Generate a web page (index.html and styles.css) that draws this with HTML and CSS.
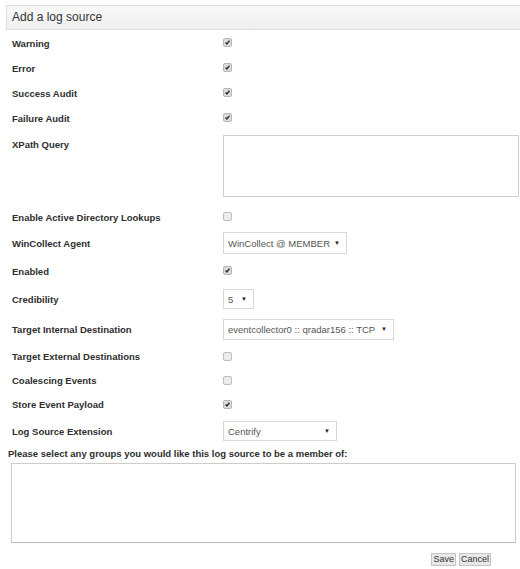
FILE: index.html
```html
<!DOCTYPE html>
<html lang="en">

<head>
    <meta charset="UTF-8" />
    <title>Add a log source</title>
    <link rel="stylesheet" href="styles.css">
</head>

<body>
    <div class="panel">
        <div class="panel-header">Add a log source</div>

        <div class="fields">
            <div class="row">
                <span class="label">Warning</span>
                <span class="check on"><svg viewBox="0 0 9 9"><path d="M2 4.6 L3.7 6.4 L7 2.3" /></svg></span>
            </div>
            <div class="row">
                <span class="label">Error</span>
                <span class="check on"><svg viewBox="0 0 9 9"><path d="M2 4.6 L3.7 6.4 L7 2.3" /></svg></span>
            </div>
            <div class="row">
                <span class="label">Success Audit</span>
                <span class="check on"><svg viewBox="0 0 9 9"><path d="M2 4.6 L3.7 6.4 L7 2.3" /></svg></span>
            </div>
            <div class="row">
                <span class="label">Failure Audit</span>
                <span class="check on"><svg viewBox="0 0 9 9"><path d="M2 4.6 L3.7 6.4 L7 2.3" /></svg></span>
            </div>
            <div class="row row-xpath">
                <span class="label">XPath Query</span>
                <div class="xpath"></div>
            </div>
            <div class="row">
                <span class="label">Enable Active Directory Lookups</span>
                <span class="check"></span>
            </div>
            <div class="row row-28">
                <span class="label">WinCollect Agent</span>
                <div class="select select-agent"><span>WinCollect @ MEMBER</span><span class="arrow">▼</span></div>
            </div>
            <div class="row row-27">
                <span class="label">Enabled</span>
                <span class="check on"><svg viewBox="0 0 9 9"><path d="M2 4.6 L3.7 6.4 L7 2.3" /></svg></span>
            </div>
            <div class="row row-30">
                <span class="label">Credibility</span>
                <div class="select select-cred"><span>5</span><span class="arrow">▼</span></div>
            </div>
            <div class="row row-30">
                <span class="label">Target Internal Destination</span>
                <div class="select select-target"><span>eventcollector0 :: qradar156 :: TCP</span><span class="arrow">▼</span></div>
            </div>
            <div class="row row-24">
                <span class="label">Target External Destinations</span>
                <span class="check"></span>
            </div>
            <div class="row row-24">
                <span class="label">Coalescing Events</span>
                <span class="check"></span>
            </div>
            <div class="row row-24">
                <span class="label">Store Event Payload</span>
                <span class="check on"><svg viewBox="0 0 9 9"><path d="M2 4.6 L3.7 6.4 L7 2.3" /></svg></span>
            </div>
            <div class="row row-30">
                <span class="label">Log Source Extension</span>
                <div class="select select-ext"><span>Centrify</span><span class="arrow">▼</span></div>
            </div>
        </div>

        <p class="groups-label">Please select any groups you would like this log source to be a member of:</p>
        <div class="groups-box"></div>

        <div class="actions">
            <button type="button">Save</button>
            <button type="button">Cancel</button>
        </div>
    </div>
</body>

</html>
```

FILE: styles.css
```css
body {
    margin: 0;
    width: 520px;
    height: 569px;
    overflow: hidden;
    font-family: "Liberation Sans", Arial, sans-serif;
    color: #333;
    background: #fff;
}

.panel {
    padding-top: 5px;
}

.panel-header {
    margin-left: 6px;
    height: 23px;
    line-height: 23px;
    padding-left: 5px;
    border: 1px solid #dedede;
    border-right: none;
    background: linear-gradient(#f9f9f9, #efefef);
    font-size: 12px;
    color: #333;
}

.fields {
    margin-left: 6px;
}

.row {
    display: grid;
    grid-template-columns: 211px 1fr;
    align-items: center;
    height: 25px;
    padding-left: 6px;
}

.row-24 {
    height: 24px;
}

.row-27 {
    height: 27px;
}

.row-28 {
    height: 28px;
}

.row-30 {
    height: 30px;
}

.row-xpath {
    height: auto;
    align-items: start;
    padding-top: 5px;
    padding-bottom: 7px;
}

.row-xpath .label {
    padding-top: 4px;
}

.label {
    font-size: 9.5px;
    font-weight: bold;
    line-height: 12px;
    color: #2e2e2e;
    padding-top: 2px;
}

.check {
    display: block;
    width: 9px;
    height: 9px;
    box-sizing: border-box;
    border: 1px solid #bdbdbd;
    border-radius: 2px;
    background: #ececec;
}

.check.on {
    background: #dcdcdc;
    border-color: #b5b5b5;
}

.check svg {
    display: block;
    width: 7px;
    height: 7px;
    fill: none;
    stroke: #2a2a2a;
    stroke-width: 1.7;
}

.xpath {
    width: 296px;
    height: 62px;
    box-sizing: border-box;
    border: 1px solid #cfcfcf;
    background: #fff;
}

.select {
    justify-self: start;
    display: flex;
    align-items: center;
    justify-content: space-between;
    height: 22px;
    box-sizing: border-box;
    padding: 0 6px 0 4px;
    border: 1px solid #d8d8d8;
    background: #fff;
    font-size: 9.5px;
    color: #555;
}

.select-agent {
    width: 124px;
}

.select-cred {
    width: 31px;
    height: 20px;
}

.select-target {
    width: 171px;
    height: 21px;
}

.select-ext {
    width: 114px;
    height: 20px;
}

.arrow {
    font-size: 6px;
    color: #222;
}

.groups-label {
    margin: 2px 0 0 8px;
    font-size: 9.5px;
    font-weight: bold;
    line-height: 12px;
    color: #2e2e2e;
}

.groups-box {
    margin: 3px 0 0 11px;
    width: 505px;
    height: 80px;
    box-sizing: border-box;
    border: 1px solid #cccccc;
    border-bottom-color: #b8b8b8;
    background: #fff;
}

.actions {
    display: flex;
    justify-content: flex-end;
    gap: 3px;
    margin-top: 10px;
    padding-right: 29px;
}

.actions button {
    height: 13px;
    padding: 0 1px;
    border: 1px solid #c6c6c6;
    background: #e8e8e8;
    font-family: "Liberation Sans", Arial, sans-serif;
    font-size: 9px;
    line-height: 11px;
    color: #333;
}
```
